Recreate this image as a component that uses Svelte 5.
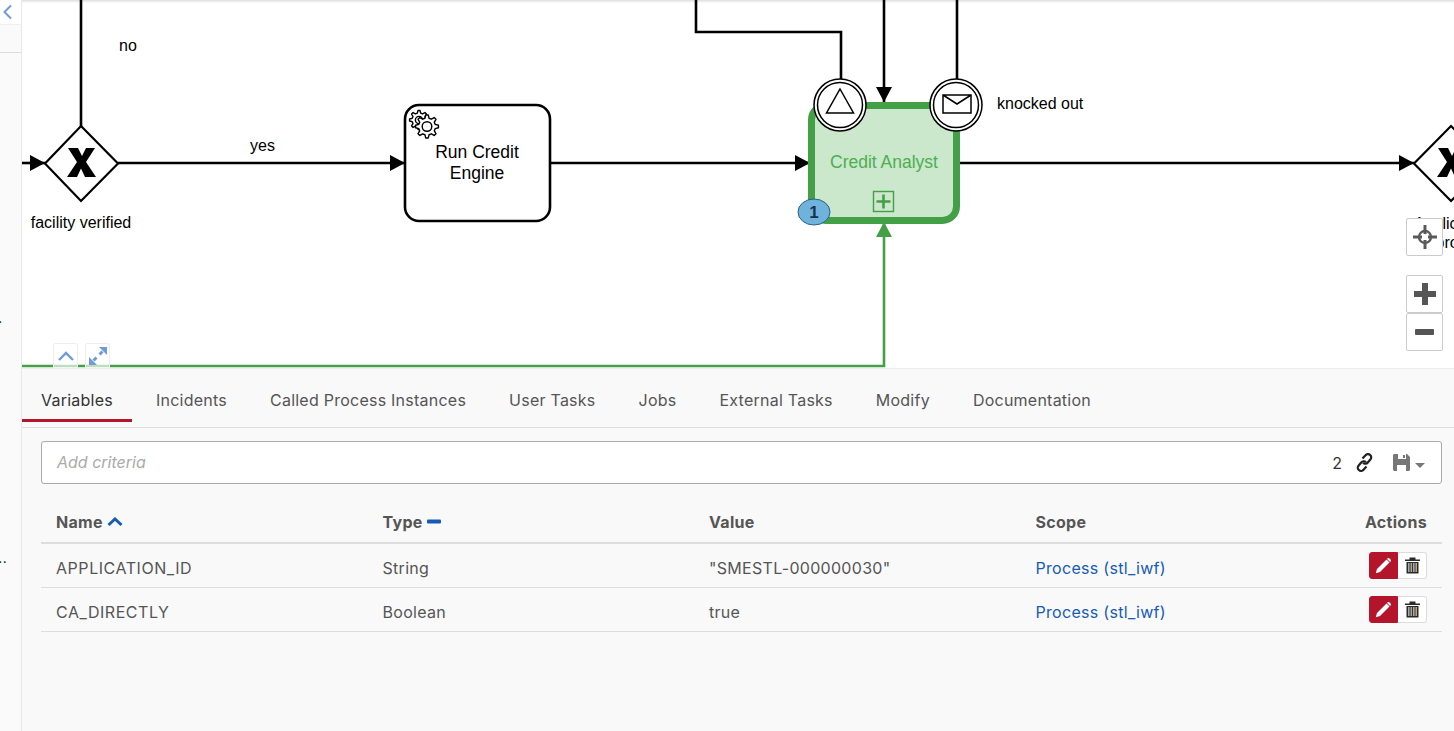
<script>
  const tabs = [
    'Variables',
    'Incidents',
    'Called Process Instances',
    'User Tasks',
    'Jobs',
    'External Tasks',
    'Modify',
    'Documentation'
  ];

  const rows = [
    { name: 'APPLICATION_ID', type: 'String', value: '"SMESTL-000000030"', scope: 'Process (stl_iwf)' },
    { name: 'CA_DIRECTLY', type: 'Boolean', value: 'true', scope: 'Process (stl_iwf)' }
  ];

  let activeTab = $state(0);

  // outline of a cog wheel, used for the service task marker
  function gear(cx, cy, outer, inner, teeth) {
    const step = (Math.PI * 2) / teeth;
    const pts = [];
    for (let i = 0; i < teeth; i++) {
      const a = i * step;
      const w = step * 0.2;
      const at = (r, t) => `${(cx + r * Math.cos(t)).toFixed(2)} ${(cy + r * Math.sin(t)).toFixed(2)}`;
      pts.push(at(inner, a - step * 0.32), at(outer, a - w * 0.7), at(outer, a + w * 0.7), at(inner, a + step * 0.32));
    }
    return 'M' + pts.join('L') + 'z';
  }
</script>

<div class="page">
  <aside class="rail">
    <div class="rail-toggle">
      <svg width="12" height="16" viewBox="0 0 12 16"><path d="M10 1.500 3.500 8l6.500 6.500" fill="none" stroke="#6f9bd8" stroke-width="2" /></svg>
    </div>
    <div class="rail-head"></div>
    <div class="rail-dot first">.</div>
    <div class="rail-dot second">..</div>
  </aside>

  <main class="content">
    <section class="canvas">
      <svg class="diagram" width="1432" height="368" viewBox="22 0 1432 368">
        <defs>
          <marker id="arrow" markerUnits="userSpaceOnUse" markerWidth="16" markerHeight="18" refX="15" refY="9" orient="auto">
            <path d="M0 1 15 9 0 17z" fill="#000" />
          </marker>
          <marker id="arrow-green" markerUnits="userSpaceOnUse" markerWidth="16" markerHeight="18" refX="15" refY="9" orient="auto">
            <path d="M0 1 15 9 0 17z" fill="#43a047" />
          </marker>
        </defs>

        <g fill="none" stroke="#000" stroke-width="2.600">
          <path d="M81 0V127" />
          <path d="M22 163H45" marker-end="url(#arrow)" />
          <path d="M118 163H405" marker-end="url(#arrow)" />
          <path d="M550 163H810" marker-end="url(#arrow)" />
          <path d="M960 163H1414" marker-end="url(#arrow)" />
          <path d="M696 0V32H841V79" />
          <path d="M884 0V102" marker-end="url(#arrow)" />
          <path d="M957 0V79" />
        </g>
        <path d="M22 366H884V222" fill="none" stroke="#43a047" stroke-width="2.600" marker-end="url(#arrow-green)" />

        <path class="gateway" d="M81 126 118 163.500 81 201 45 163.500z" />
        <path d="M68 148h10l4 8 4-8h9l-9 14 10 15H85l-4-8.500-4 8.500H67l10-15z" fill="#000" />

        <rect x="405" y="105" width="145" height="116" rx="14" fill="#fff" stroke="#000" stroke-width="2.600" />
        <g fill="#fff" stroke="#000" stroke-width="1.400" stroke-linejoin="round">
          <path d={gear(419, 120, 9.500, 7, 8)} />
          <circle cx="419" cy="120" r="3.600" />
          <path d={gear(427, 126.500, 11.500, 8.500, 8)} />
          <circle cx="427" cy="126.500" r="4.800" />
        </g>
        <text class="label task" x="477" y="158" text-anchor="middle">Run Credit</text>
        <text class="label task" x="477" y="179" text-anchor="middle">Engine</text>

        <rect x="811.500" y="105.500" width="145" height="115" rx="14" fill="#cbe7cc" stroke="#43a047" stroke-width="7" />
        <text class="label task green" x="884" y="168" text-anchor="middle">Credit Analyst</text>
        <rect x="873.500" y="191.500" width="20" height="20" fill="none" stroke="#43a047" stroke-width="1.400" />
        <path d="M883.500 194.500v14M876.500 201.500h14" stroke="#43a047" stroke-width="2.600" />

        <ellipse cx="814" cy="212" rx="16" ry="13" fill="#6fb3dc" stroke="#2a5f85" stroke-width="1" />
        <text class="badge" x="814" y="218" text-anchor="middle">1</text>

        <circle class="event" cx="840" cy="105" r="26" />
        <circle class="event" cx="840" cy="105" r="22.500" />
        <path d="M840 89 853.500 113h-27z" fill="#fff" stroke="#000" stroke-width="1.500" />

        <circle class="event" cx="956" cy="105" r="26" />
        <circle class="event" cx="956" cy="105" r="22.500" />
        <path d="M943 95h28v18h-28zM943 95l14 9 14-9" fill="#fff" stroke="#000" stroke-width="1.500" />

        <path class="gateway" d="M1451 126 1488 163.500 1451 201 1414 163.500z" />
        <path d="M1438 148h10l4 8 4-8h9l-9 14 10 15h-11l-4-8.500-4 8.500h-10l10-15z" fill="#000" />

        <text class="label" x="119" y="51">no</text>
        <text class="label" x="250" y="151">yes</text>
        <text class="label" x="997" y="109">knocked out</text>
        <text class="label" x="81" y="228" text-anchor="middle">facility verified</text>
        <text class="label" x="1414" y="229">Application</text>
        <text class="label" x="1416" y="248">Approved</text>
      </svg>

      <div class="panel-toggles">
        <button type="button" class="toggle" aria-label="collapse">
          <svg width="18" height="12" viewBox="0 0 18 12"><path d="M2 10 9 3l7 7" fill="none" stroke="#6f9bd8" stroke-width="2.400" /></svg>
        </button>
        <button type="button" class="toggle" aria-label="maximize">
          <svg width="22" height="22" viewBox="0 0 22 22" fill="#6f9bd8">
            <path d="M20 2v8l-8-8z" />
            <path d="M2 20v-8l8 8z" />
            <path d="M15.500 6.500 12.500 9.500M9.500 12.500 6.500 15.500" stroke="#6f9bd8" stroke-width="3" />
          </svg>
        </button>
      </div>

      <div class="zoom-controls">
        <button type="button" class="zoom-btn reset" aria-label="reset zoom">
          <svg width="26" height="26" viewBox="0 0 26 26" fill="none" stroke="#5a5a5a">
            <circle cx="13" cy="13" r="6" stroke-width="2.400" />
            <path d="M13 1v9M13 16v9M1 13h9M16 13h9" stroke-width="3" />
          </svg>
        </button>
        <div class="zoom-group">
          <button type="button" class="zoom-btn" aria-label="zoom in">
            <svg width="24" height="24" viewBox="0 0 24 24"><path d="M12 1v22M1 12h22" stroke="#555" stroke-width="6" /></svg>
          </button>
          <button type="button" class="zoom-btn" aria-label="zoom out">
            <svg width="20" height="8" viewBox="0 0 20 8"><rect width="19" height="6" y="1" rx="1" fill="#555" /></svg>
          </button>
        </div>
      </div>
    </section>

    <section class="panel">
      <nav class="tabs">
        {#each tabs as tab, i}
          <button type="button" class="tab {i === activeTab ? 'active' : ''}" onclick={() => (activeTab = i)}>{tab}</button>
        {/each}
      </nav>

      <div class="body">
        <div class="search">
          <span class="placeholder">Add criteria</span>
          <span class="count">2</span>
          <svg class="link-icon" width="17" height="19" viewBox="0 0 17 19" fill="none" stroke="#222" stroke-width="2.200">
            <path d="M6.500 5.500 9.500 2.300a3.200 3.200 0 0 1 5 4L11.800 9.500a3.200 3.200 0 0 1-4.800.3" />
            <path d="M10.500 13.500 7.500 16.700a3.200 3.200 0 0 1-5-4L5.200 9.500a3.200 3.200 0 0 1 4.800-.3" />
          </svg>
          <svg class="save-icon" width="32" height="17" viewBox="0 0 32 17">
            <path fill-rule="evenodd" d="M0 1.500C0 .7.700 0 1.500 0H14l3 3v12.500c0 .8-.7 1.500-1.500 1.500h-14C.7 17 0 16.300 0 15.500zM5 0h8v5H5zM4 11h9v6H4z" fill="#777" />
            <path d="M10 1h2v3h-2z" fill="#777" />
            <path d="M22 9h10l-5 5z" fill="#777" />
          </svg>
        </div>

        <table>
          <thead>
            <tr>
              <th>Name <svg class="sort" width="16" height="10" viewBox="0 0 16 10"><path d="M1.500 8 8 2l6.500 6" fill="none" stroke="#155cb5" stroke-width="3" /></svg></th>
              <th>Type <svg class="sort" width="14" height="10" viewBox="0 0 14 10"><rect y="2.500" width="14" height="4" rx="1" fill="#155cb5" /></svg></th>
              <th>Value</th>
              <th>Scope</th>
              <th class="actions">Actions</th>
            </tr>
          </thead>
          <tbody>
            {#each rows as row}
              <tr>
                <td class="name">{row.name}</td>
                <td>{row.type}</td>
                <td>{row.value}</td>
                <td class="scope">{row.scope}</td>
                <td class="actions">
                  <span class="btn-group">
                    <button type="button" class="btn edit" aria-label="edit">
                      <svg width="17" height="17" viewBox="0 0 17 17" fill="#fff">
                        <path d="M11.500 2.500 14.500 5.500 5 15 .8 16.200 2 12z" />
                        <path d="M12.500 1.500c.6-.6 1.400-.6 2 0l1 1c.6.6.6 1.400 0 2l-.4.400-3-3z" />
                      </svg>
                    </button>
                    <button type="button" class="btn remove" aria-label="delete">
                      <svg width="15" height="17" viewBox="0 0 15 17">
                        <path d="M0 2.500h15V4H0zM4.500 .5h6V2.500h-6z" fill="#2a2a2a" />
                        <path d="M1.500 5h12v11.500h-12z" fill="#2a2a2a" />
                        <path d="M3 6h1.600v9H3z" fill="#8fb0cc" />
                        <path d="M5.500 6h1.600v9H5.500z" fill="#c9a06a" />
                        <path d="M8 6h1.600v9H8z" fill="#8fb0cc" />
                        <path d="M10.400 6H12v9h-1.600z" fill="#c9a06a" />
                      </svg>
                    </button>
                  </span>
                </td>
              </tr>
            {/each}
          </tbody>
        </table>
      </div>
    </section>
  </main>
</div>

<style>
  :global(body) {
    margin: 0;
    background: #fff;
  }

  .page {
    display: flex;
    height: 731px;
    overflow: hidden;
    font-family: Inter, 'Open Sans', sans-serif;
    color: #555;
  }

  .rail {
    width: 21px;
    flex: none;
    background: #fafafa;
    border-right: 1px solid #e8e8e8;
    color: #333;
    font-family: 'Liberation Sans', sans-serif;
    font-size: 16px;
    overflow: hidden;
  }

  .rail-toggle {
    height: 24px;
    display: flex;
    align-items: center;
    padding-left: 1px;
    background: #fff;
    border-bottom: 1px solid #f0f0f0;
  }

  .rail-head {
    height: 27px;
    border-bottom: 1px solid #ddd;
  }

  .rail-dot {
    line-height: 14px;
    margin-left: -2px;
    color: #333;
  }

  .rail-dot.first {
    margin-top: 258px;
  }

  .rail-dot.second {
    margin-top: 226px;
  }

  .content {
    flex: 1;
    min-width: 0;
    display: flex;
    flex-direction: column;
  }

  .canvas {
    position: relative;
    height: 368px;
    flex: none;
    overflow: hidden;
    box-shadow: inset 0 3px 3px -2px rgba(0, 0, 0, 0.18);
  }

  .diagram {
    display: block;
  }

  .gateway {
    fill: #fff;
    stroke: #000;
    stroke-width: 2.200;
  }

  .event {
    fill: #fff;
    stroke: #000;
    stroke-width: 1.500;
  }

  .label {
    font-family: 'Liberation Sans', Arial, sans-serif;
    font-size: 16px;
    fill: #000;
  }

  .label.task {
    font-size: 17.500px;
  }

  .label.green {
    fill: #4caf50;
  }

  .badge {
    font-family: 'Liberation Sans', Arial, sans-serif;
    font-size: 17px;
    font-weight: bold;
    fill: #17324d;
  }

  .panel-toggles {
    position: absolute;
    left: 31px;
    bottom: 0;
    display: flex;
    gap: 7px;
  }

  .toggle {
    width: 25px;
    height: 25px;
    padding: 0;
    display: flex;
    align-items: center;
    justify-content: center;
    background: rgba(255, 255, 255, 0.65);
    border: 1px solid #eee;
    border-bottom: none;
    border-radius: 3px 3px 0 0;
  }

  .zoom-controls {
    position: absolute;
    top: 218px;
    right: 11px;
    display: flex;
    flex-direction: column;
    gap: 19px;
  }

  .zoom-group {
    display: flex;
    flex-direction: column;
  }

  .zoom-btn {
    width: 37px;
    height: 38px;
    padding: 0;
    display: flex;
    align-items: center;
    justify-content: center;
    background: #fff;
    border: 1px solid #ccc;
    border-radius: 2px;
  }

  .panel {
    flex: 1;
    background: #f9f9f9;
    border-top: 1px solid #eee;
  }

  .tabs {
    height: 59px;
    box-sizing: border-box;
    display: flex;
    border-bottom: 1px solid #ddd;
  }

  .tab {
    height: 53px;
    padding: 12px 19px 0;
    margin-right: 5px;
    background: none;
    border: none;
    border-bottom: 3px solid transparent;
    font: inherit;
    font-size: 16px;
    letter-spacing: 0.24px;
    color: #555;
    cursor: pointer;
  }

  .tab.active {
    color: #333;
    border-bottom-color: #b5152b;
  }

  .body {
    padding: 13px 12px 0 19px;
  }

  .search {
    height: 43px;
    box-sizing: border-box;
    display: flex;
    align-items: center;
    padding: 0 16px 0 15px;
    background: #fff;
    border: 1px solid #aaa;
    border-radius: 3px;
  }

  .placeholder {
    flex: 1;
    padding-bottom: 2px;
    font-style: italic;
    font-size: 16px;
    color: #aaa;
  }

  .count {
    font-size: 16px;
    color: #333;
  }

  .link-icon {
    margin-left: 14px;
  }

  .save-icon {
    margin-left: 20px;
  }

  table {
    width: 100%;
    margin-top: 18px;
    border-collapse: collapse;
    table-layout: fixed;
    font-size: 16px;
    letter-spacing: 0.3px;
  }

  th {
    height: 40px;
    padding: 0 15px;
    text-align: left;
    font-weight: 700;
    border-bottom: 2px solid #ddd;
  }

  th:last-child {
    width: 65px;
  }

  td {
    height: 44px;
    padding: 6px 15px 0;
    box-sizing: border-box;
    border-bottom: 1px solid #ddd;
  }

  td.name {
    letter-spacing: 0.55px;
  }

  .sort {
    vertical-align: 1px;
  }

  .scope {
    color: #155cb5;
  }

  td.actions {
    padding-top: 0;
  }

  .actions {
    text-align: right;
    white-space: nowrap;
  }

  .btn-group {
    display: inline-flex;
    vertical-align: middle;
  }

  .btn {
    width: 29px;
    height: 27px;
    padding: 0;
    display: flex;
    align-items: center;
    justify-content: center;
    border: 1px solid #ddd;
  }

  .btn.edit {
    background: #b5152b;
    border-color: #b5152b;
    border-radius: 3px 0 0 3px;
  }

  .btn.remove {
    background: #fff;
    border-left: none;
    border-radius: 0 3px 3px 0;
  }
</style>
